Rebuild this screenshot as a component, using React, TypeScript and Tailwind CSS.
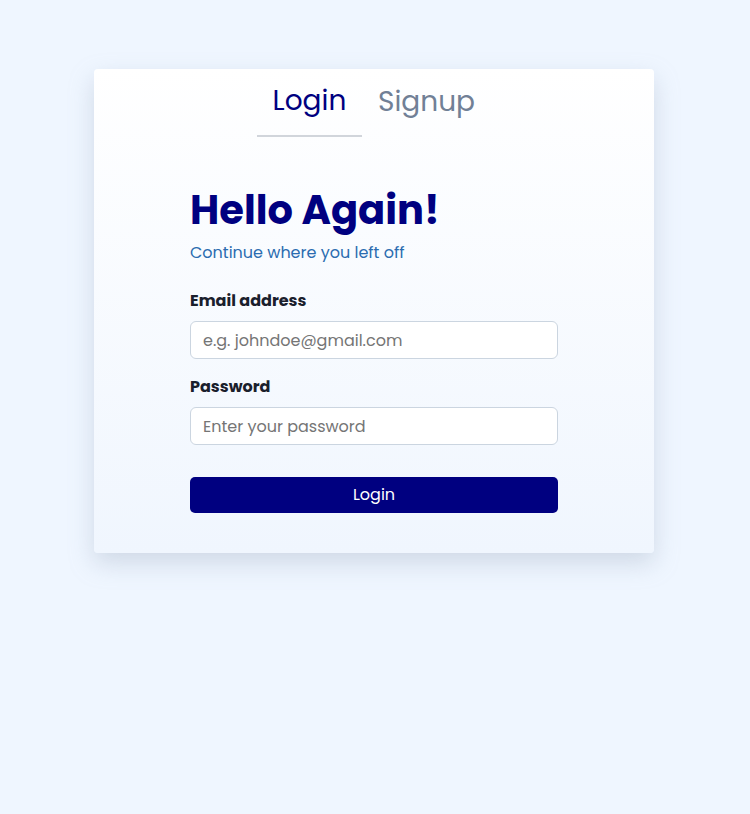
import React from "react";

export default function App() {
  return (
    <div
      className="min-h-[814px] w-full bg-[#eff6ff] pt-[69px]"
      style={{ fontFamily: '"Poppins", "Noto Sans", sans-serif' }}
    >
      <div className="ml-[94px] w-[560px] rounded-[4px] bg-gradient-to-b from-white to-[#f0f6fe] pb-[40px] shadow-[0_10px_25px_rgba(148,163,184,0.35)]">
        <div className="flex justify-center">
          <button className="w-[105px] border-b-2 border-[#d1d5db] pt-[12px] pb-[14px] text-center text-[28px] leading-[40px] text-[#000080]">
            Login
          </button>
          <button className="px-[16px] pt-[12px] pb-[14px] text-[28px] leading-[40px] text-[#718096]">
            Signup
          </button>
        </div>
        <div className="mx-auto mt-[49px] w-[368px]">
          <h1 className="text-[40px] font-bold leading-[48px] text-[#000080]">Hello Again!</h1>
          <p className="mt-[7px] text-[16px] leading-[24px] text-[#2b6cb0]">Continue where you left off</p>
          <form className="mt-[25px] flex flex-col">
            <label className="text-[16px] font-bold leading-[22px] text-[#1a202c]">Email address</label>
            <input
              type="email"
              placeholder="e.g. johndoe@gmail.com"
              className="mt-[9px] h-[38px] w-full rounded-[6px] border border-[#cbd5e0] bg-white px-[12px] text-[16px] text-[#1a202c] placeholder:text-[#757575] outline-none"
            />
            <label className="mt-[17px] text-[16px] font-bold leading-[22px] text-[#1a202c]">Password</label>
            <input
              type="password"
              placeholder="Enter your password"
              className="mt-[9px] h-[38px] w-full rounded-[6px] border border-[#cbd5e0] bg-white px-[12px] text-[16px] text-[#1a202c] placeholder:text-[#757575] outline-none"
            />
            <button
              type="button"
              className="mt-[32px] h-[36px] w-full rounded-[5px] bg-[#000080] text-[16px] text-white"
            >
              Login
            </button>
          </form>
        </div>
      </div>
    </div>
  );
}
